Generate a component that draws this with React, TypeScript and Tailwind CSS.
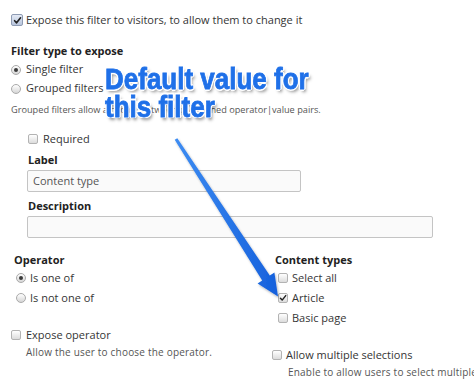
import React from "react";

function Check({ checked = false, big = false }: { checked?: boolean; big?: boolean }) {
  return (
    <span
      className={
        "relative inline-flex shrink-0 items-center justify-center rounded-[2px] border " +
        (big
          ? "h-[12px] w-[12px] border-[#8e9bb3] bg-gradient-to-b from-[#e4eaf5] to-[#b9c6dd]"
          : "h-[10px] w-[10px] border-[#b3b3b3] bg-gradient-to-b from-[#ffffff] to-[#dcdcdc]")
      }
    >
      {checked && (
        <svg viewBox="0 0 10 10" className={big ? "h-[9px] w-[9px]" : "h-[8px] w-[8px]"}>
          <path d="M1.8 5.2 L4 7.6 L8.4 2" fill="none" stroke="#222" strokeWidth="1.8" strokeLinecap="round" strokeLinejoin="round" />
        </svg>
      )}
    </span>
  );
}

function Radio({ checked = false }: { checked?: boolean }) {
  return (
    <span className="relative inline-flex h-[10px] w-[10px] shrink-0 items-center justify-center rounded-full border border-[#aaaaaa] bg-gradient-to-b from-[#ffffff] to-[#d6d6d6]">
      {checked && <span className="h-[4px] w-[4px] rounded-full bg-[#3a3a3a]" />}
    </span>
  );
}

export default function App() {
  return (
    <div
      className="relative h-[380px] w-[474px] overflow-hidden bg-white text-[11px] text-[#353535]"
      style={{ fontFamily: '"Open Sans", "Liberation Sans", sans-serif' }}
    >
      <div className="pl-[11px] pt-[11px]">
        {/* top checkbox */}
        <div className="flex h-[18px] items-center gap-[3px]">
          <Check checked big />
          <span>Expose this filter to visitors, to allow them to change it</span>
        </div>

        <div className="mt-[13px] flex h-[18px] items-center font-bold text-[#222]">Filter type to expose</div>
        <div className="flex h-[19px] items-center gap-[5px]">
          <Radio checked />
          <span>Single filter</span>
        </div>
        <div className="flex h-[19px] items-center gap-[5px]">
          <Radio />
          <span>Grouped filters</span>
        </div>
        <div className="mt-[6px] flex h-[12px] items-center text-[9.2px] text-[#555]">
          Grouped filters allow a choice between predefined operator|value pairs.
        </div>

        {/* indented block */}
        <div className="pl-[16px]">
          <div className="mt-[14px] flex h-[18px] items-center gap-[5px] pl-[1px]">
            <Check />
            <span>Required</span>
          </div>
          <div className="mt-[4px] flex h-[16px] items-center pl-[1px] font-bold text-[#222]">Label</div>
          <div className="mt-[2px] flex h-[22px] w-[274px] items-center rounded-[2px] border border-[#c4c4c4] bg-[#fafafa] pl-[5px] text-[#555]">
            Content type
          </div>
          <div className="mt-[6px] flex h-[16px] items-center pl-[1px] font-bold text-[#222]">Description</div>
          <div className="mt-[2px] h-[22px] w-[406px] rounded-[2px] border border-[#c4c4c4] bg-[#fafafa]" />
        </div>

        {/* two columns */}
        <div className="mt-[14px] flex">
          <div className="w-[261px]">
            <div className="flex h-[16px] items-center pl-[3px] font-bold text-[#222]">Operator</div>
            <div className="flex h-[20px] items-center gap-[4px] pl-[5px]">
              <Radio checked />
              <span>Is one of</span>
            </div>
            <div className="flex h-[20px] items-center gap-[4px] pl-[5px]">
              <Radio />
              <span>Is not one of</span>
            </div>
            <div className="mt-[18px] flex h-[18px] items-center gap-[5px]">
              <Check />
              <span>Expose operator</span>
            </div>
            <div className="mt-[1px] flex h-[14px] items-center whitespace-nowrap pl-[15px] text-[10px] tracking-[0.2px] text-[#555]">
              Allow the user to choose the operator.
            </div>
          </div>
          <div className="w-[200px]">
            <div className="flex h-[16px] items-center pl-[3px] font-bold text-[#222]">Content types</div>
            <div className="flex h-[20px] items-center gap-[4px] pl-[6px]">
              <Check />
              <span>Select all</span>
            </div>
            <div className="flex h-[20px] items-center gap-[4px] pl-[6px]">
              <Check checked />
              <span>Article</span>
            </div>
            <div className="flex h-[20px] items-center gap-[4px] pl-[6px]">
              <Check />
              <span>Basic page</span>
            </div>
            <div className="mt-[18px] flex h-[18px] items-center gap-[4px]">
              <Check />
              <span>Allow multiple selections</span>
            </div>
            <div className="mt-[1px] flex h-[14px] items-center whitespace-nowrap pl-[16px] text-[10px] tracking-[0.2px] text-[#555]">
              Enable to allow users to select multiple items.
            </div>
          </div>
        </div>
      </div>

      {/* annotation arrow */}
      <svg className="pointer-events-none absolute left-0 top-0" width="474" height="380" viewBox="0 0 474 380">
        <defs>
          <linearGradient id="ag" x1="0" y1="0" x2="1" y2="0">
            <stop offset="0" stopColor="#3d8cf2" />
            <stop offset="1" stopColor="#1560dc" />
          </linearGradient>
          <filter id="sh" x="-20%" y="-20%" width="140%" height="140%">
            <feDropShadow dx="1" dy="1.5" stdDeviation="1.2" floodColor="#000" floodOpacity="0.3" />
          </filter>
        </defs>
        <polygon
          points="177.3,138.2 269.8,275.6 274.4,272.6 278,296.5 257.6,283.4 262.2,280.4 174.7,139.8"
          fill="url(#ag)"
          filter="url(#sh)"
        />
      </svg>

      {/* annotation text */}
      <div
        className="pointer-events-none absolute left-[105px] top-[66px] origin-top-left scale-y-[1.1] text-[26px] font-bold leading-[24.5px] tracking-[0px] text-[#1f70e8] [-webkit-text-stroke:0.7px_#1f70e8] [text-shadow:1.6px_0_0_#fff,-1.6px_0_0_#fff,0_1.6px_0_#fff,0_-1.6px_0_#fff,1.2px_1.2px_0_#fff,-1.2px_-1.2px_0_#fff,1.2px_-1.2px_0_#fff,-1.2px_1.2px_0_#fff,2px_3px_3px_rgba(0,0,0,0.45)]"
        style={{ fontFamily: '"Liberation Sans", Arial, sans-serif' }}
      >
        <div>Default value for</div>
        <div>this filter</div>
      </div>
    </div>
  );
}
